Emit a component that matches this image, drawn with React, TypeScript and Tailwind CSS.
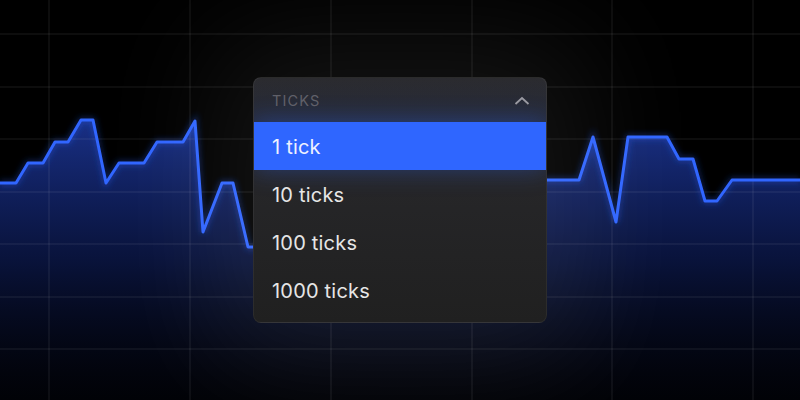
import React from "react";

const OPTIONS = ["1 tick", "10 ticks", "100 ticks", "1000 ticks"];

const LINE =
  "M0,183 L16,183 L28,163 L43,163 L55,142 L68,142 L81,120 L93,120 L106,183 L119,163 L144,163 L157,142 L183,142 L195,121 L203,232 L222,183 L233,183 L248,247 L320,247 L420,200 L540,180 L579,180 L593,137 L616,222 L628,137 L667,137 L679,159 L693,159 L705,201 L717,201 L732,180 L800,180";

const VLINES = [49, 190, 331, 472, 612, 753];
const HLINES = [34, 87, 139, 192, 244, 297, 349];

function Chart() {
  return (
    <svg
      className="absolute inset-0 h-full w-full"
      viewBox="0 0 800 400"
      preserveAspectRatio="none"
    >
      <defs>
        <linearGradient id="fill" x1="0" y1="120" x2="0" y2="400" gradientUnits="userSpaceOnUse">
          <stop offset="0" stopColor="#2a50e0" stopOpacity="0.6" />
          <stop offset="0.5" stopColor="#1a36a8" stopOpacity="0.35" />
          <stop offset="1" stopColor="#0a1440" stopOpacity="0.1" />
        </linearGradient>
        <filter id="glow" x="-10%" y="-50%" width="120%" height="200%">
          <feGaussianBlur stdDeviation="3" />
        </filter>
      </defs>
      <path d={`${LINE} L800,400 L0,400 Z`} fill="url(#fill)" />
      {VLINES.map((x) => (
        <line key={x} x1={x} y1={0} x2={x} y2={400} stroke="#ffffff" strokeOpacity="0.07" strokeWidth="1.5" />
      ))}
      {HLINES.map((y) => (
        <line key={y} x1={0} y1={y} x2={800} y2={y} stroke="#ffffff" strokeOpacity="0.07" strokeWidth="1.5" />
      ))}
      <path d={LINE} fill="none" stroke="#2f63ff" strokeOpacity="0.35" strokeWidth="5" filter="url(#glow)" />
      <path d={LINE} fill="none" stroke="#3166ff" strokeWidth="3" strokeLinejoin="round" />
    </svg>
  );
}

export default function App() {
  return (
    <div
      className="relative h-[400px] w-full overflow-hidden bg-black"
      style={{ fontFamily: "Inter, 'Noto Sans', sans-serif" }}
    >
      <Chart />
      <div className="relative flex h-full items-center justify-center">
        <div className="w-[294px] overflow-hidden rounded-lg border border-white/5 bg-gradient-to-b from-[#2b2b2f] to-[#202020] pb-2 shadow-[0_0_120px_40px_rgba(255,255,255,0.08)]">
          <div className="flex h-[44px] items-center justify-between bg-gradient-to-b from-transparent to-[#272c3c] pl-[18px] pr-[16px] pt-[2px]">
            <span className="text-[14.5px] tracking-[0.08em] text-[#606069]">TICKS</span>
            <svg width="16" height="10" viewBox="0 0 16 10">
              <polyline points="1.5,8 8,2 14.5,8" fill="none" stroke="#9a9aa2" strokeWidth="1.8" />
            </svg>
          </div>
          {OPTIONS.map((opt, i) => (
            <div
              key={opt}
              className={
                i === 0
                  ? "flex h-[48px] items-center bg-[#2f66ff] pl-[18px] pt-[1px] text-[20px] tracking-[0.01em] text-[#eef1ff] shadow-[0_0_24px_rgba(47,102,255,0.35)]"
                  : "flex h-[48px] items-center pl-[18px] pt-[1px] text-[20px] tracking-[0.01em] text-[#e6e6e6]"
              }
            >
              {opt}
            </div>
          ))}
        </div>
      </div>
    </div>
  );
}
